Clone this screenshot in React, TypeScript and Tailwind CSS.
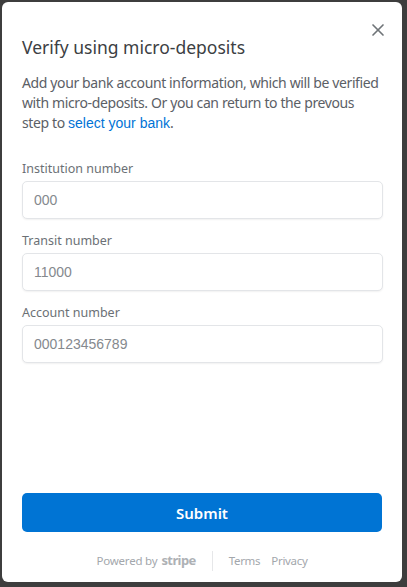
import { X } from "lucide-react";

const FIELDS = [
  { label: "Institution number", placeholder: "000" },
  { label: "Transit number", placeholder: "11000" },
  { label: "Account number", placeholder: "000123456789" },
];

export default function App() {
  return (
    <div className="h-[587px] w-[407px] overflow-hidden bg-[#3d3d3d] pl-[2px] pt-[2px] font-['Noto_Sans',sans-serif]">
      <div className="relative flex h-[580px] w-[400px] flex-col rounded-md bg-white px-5">
        <button type="button" className="absolute right-[14px] top-[18px] text-[#6f7478]">
          <X size={20} strokeWidth={2} />
        </button>

        <h1 className="mt-[33px] text-[17.5px] leading-6 text-[#3c4043]">Verify using micro-deposits</h1>
        <p className="mt-[14px] text-[14px] leading-5 tracking-[-0.38px] text-[#5b6066]">
          Add your bank account information, which will be verified with micro-deposits. Or you can return to the prevous
          <br />
          step to{" "}
          <a href="#" className="font-['Liberation_Sans',sans-serif] tracking-normal text-[#0073d6]">
            select your bank
          </a>
          .
        </p>

        <div className="mt-[27px] flex flex-col gap-[13px]">
          {FIELDS.map((field) => (
            <label key={field.label} className="block">
              <span className="block text-[12.5px] leading-[18px] text-[#6b7075]">{field.label}</span>
              <input
                type="text"
                placeholder={field.placeholder}
                className="mt-[3px] block h-[38px] w-[361px] rounded-[5px] border border-[#e3e5e8] bg-white px-[11px] font-['Liberation_Sans',sans-serif] text-[14px] text-[#30313d] shadow-[0_1px_2px_rgba(0,0,0,0.06)] outline-none placeholder:text-[#85898e]"
              />
            </label>
          ))}
        </div>

        <button
          type="button"
          className="mt-auto h-[39px] w-[360px] rounded-[5px] bg-[#0074d4] pt-px text-[15px] font-semibold text-white"
        >
          Submit
        </button>

        <footer className="mb-[11px] mt-[19px] flex h-5 items-center justify-center text-[11.5px] text-[#a3a7ac]">
          <span className="tracking-[-0.2px]">Powered by</span>
          <span className="ml-1 text-[13px] font-bold tracking-[-0.6px] text-[#aeb1b5]">stripe</span>
          <span className="mx-4 h-5 w-px bg-[#e6e7e9]" />
          <a href="#" className="tracking-[-0.3px]">
            Terms
          </a>
          <a href="#" className="ml-[11px] tracking-[-0.3px]">
            Privacy
          </a>
        </footer>
      </div>
    </div>
  );
}
